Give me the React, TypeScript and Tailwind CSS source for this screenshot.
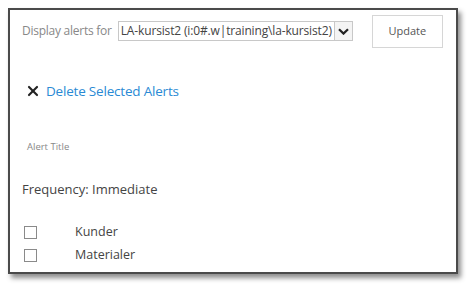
import { X } from 'lucide-react'

const font = { fontFamily: '"Open Sans", "Noto Sans", sans-serif' }

function Check({ label }: { label: string }) {
  return (
    <div className="flex items-center h-[23px]">
      <span className="w-[13px] h-[13px] border border-[#8a8a8a] bg-white" />
      <span className="ml-[38px] text-[12.5px] text-[#444]">{label}</span>
    </div>
  )
}

export default function App() {
  return (
    <div className="w-[474px] h-[292px] bg-white p-2" style={font}>
      <div className="w-[450px] h-[266px] border-2 border-[#4a4a4a] bg-white shadow-[3px_4px_5px_rgba(0,0,0,0.45)] pl-3 pr-3">
        {/* Top row */}
        <div className="flex items-center h-[40px] mt-[1px]">
          <span className="text-[12px] text-[#888] tracking-[-0.25px]">Display alerts for</span>
          <div className="ml-[6px] flex items-center h-[20px] border border-[#c8c8c8]">
            <span className="px-[2px] text-[12px] text-[#444] tracking-[-0.15px] whitespace-nowrap">
              LA-kursist2 (i:0#.w|training\la-kursist2)
            </span>
            <span className="w-[18px] h-[18px] border-l border-[#c8c8c8] bg-[#f4f4f4] flex items-center justify-center">
              <svg width="11" height="7" viewBox="0 0 11 7">
                <path d="M1 1.2 L5.5 5.6 L10 1.2" stroke="#222" strokeWidth="2.2" fill="none" />
              </svg>
            </span>
          </div>
          <button className="ml-[19px] w-[71px] h-[33px] border border-[#d6d6d6] bg-white text-[11px] text-[#555]">
            Update
          </button>
        </div>

        {/* Delete */}
        <div className="flex items-center mt-[30px] h-[20px] ml-[3px]">
          <X size={16} strokeWidth={3.2} className="text-[#222]" />
          <span className="ml-[5px] text-[13.5px] text-[#2a8ad4] tracking-[-0.2px]">Delete Selected Alerts</span>
        </div>

        <div className="mt-[39px] ml-[5px] text-[9.5px] text-[#888]">Alert Title</div>

        <div className="mt-[26px] text-[13px] text-[#444]">Frequency: Immediate</div>

        <div className="mt-[21px] ml-[2px]">
          <Check label="Kunder" />
          <Check label="Materialer" />
        </div>
      </div>
    </div>
  )
}
